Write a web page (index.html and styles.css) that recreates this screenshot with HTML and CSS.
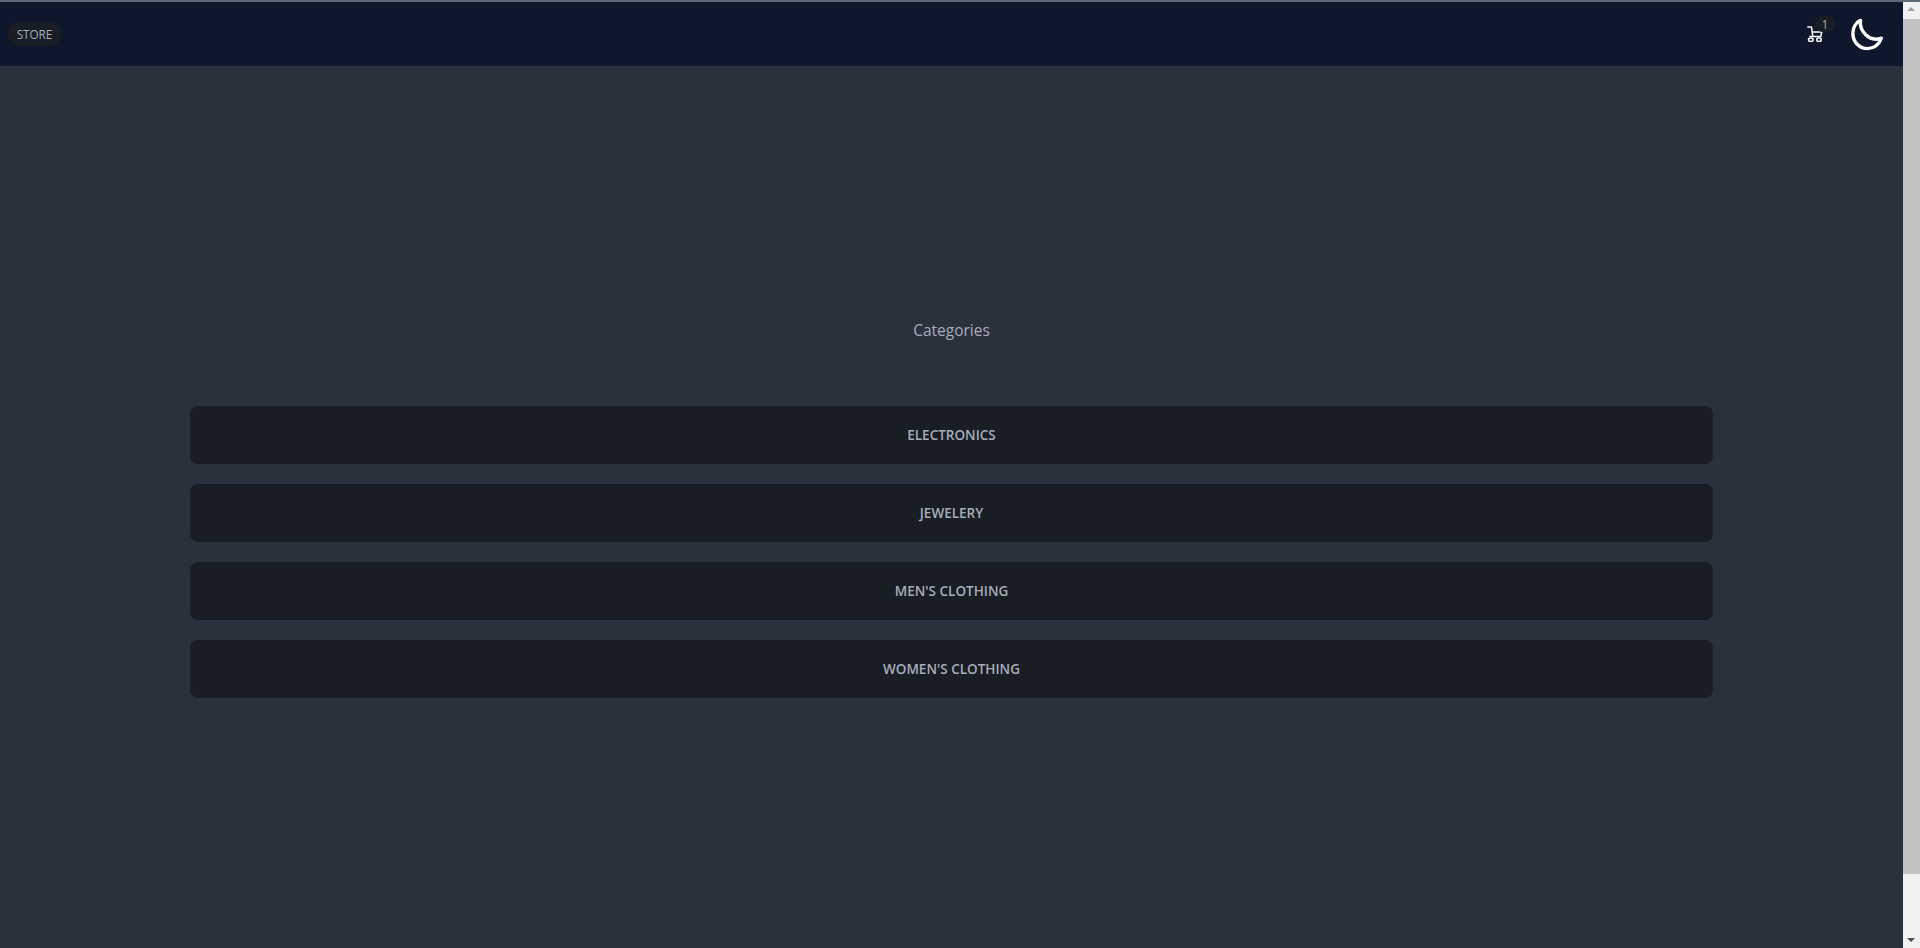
FILE: index.html
```html
<!DOCTYPE html>
<html lang="en">
<head>
<meta charset="utf-8">
<title>Store</title>
<link rel="stylesheet" href="styles.css">
</head>
<body>
<div class="topline"></div>
<div class="shell">
  <div class="app">
    <header class="navbar">
      <a class="brand">STORE</a>
      <div class="actions">
        <div class="cart">
          <svg class="cart-icon" viewBox="0 0 16 17" fill="none" stroke="currentColor" stroke-width="1.5" stroke-linejoin="round" stroke-linecap="round">
            <path d="M.8 2H4.500L5.800 11.500M5 7H14.800L13.800 11.500H3"/>
            <ellipse cx="3.800" cy="14.800" rx="2.300" ry="1.700"/>
            <ellipse cx="12" cy="14.800" rx="2.300" ry="1.700"/>
          </svg>
          <span class="badge">1</span>
        </div>
        <svg class="moon" viewBox="0 0 34 34" fill="none" stroke="currentColor" stroke-width="3.400" stroke-linejoin="round">
          <path d="M10.500 3.400C5.800 5.400 2.900 10.800 2.900 16.400 2.900 25 9.600 31.600 17.600 31.600 23.600 31.600 28.800 27.600 31.400 21.200 26 23 20 22 15.800 17.800 11.800 13.800 9.800 8.600 10.500 3.400Z"/>
        </svg>
      </div>
    </header>
    <main class="content">
      <h1 class="title">Categories</h1>
      <div class="list">
        <button class="category">ELECTRONICS</button>
        <button class="category">JEWELERY</button>
        <button class="category">MEN'S CLOTHING</button>
        <button class="category">WOMEN'S CLOTHING</button>
      </div>
    </main>
  </div>
  <div class="scrollbar">
    <div class="arrow arrow-up"></div>
    <div class="thumb"></div>
    <div class="arrow arrow-down"></div>
  </div>
</div>
</body>
</html>
```
FILE: styles.css
```css
* { box-sizing: border-box; }
html, body { margin: 0; height: 100%; overflow: hidden; }
body {
  font-family: "Open Sans", "Noto Sans", sans-serif;
  background: #2a303c;
  color: #a6adbb;
  display: flex;
  flex-direction: column;
}
.topline { height: 2px; background: #5c6b7a; flex: none; }
.shell { flex: 1; display: flex; min-height: 0; }
.app { flex: 1; min-width: 0; display: flex; flex-direction: column; }
.navbar {
  height: 64px;
  flex: none;
  background: #0e172b;
  display: flex;
  align-items: center;
  justify-content: space-between;
  padding: 0 19px 0 8px;
}
.brand {
  height: 24px;
  width: 53px;
  border-radius: 12px;
  background: #191d24;
  display: flex;
  align-items: center;
  justify-content: center;
  font-size: 11.7px;
  color: #a6adbb;
}
.actions { display: flex; align-items: center; gap: 7px; }
.cart { position: relative; width: 42px; height: 40px; color: #fff; }
.cart-icon { position: absolute; left: 6px; top: 11px; width: 16px; height: 17px; }
.badge {
  position: absolute;
  left: 14px;
  top: 2px;
  width: 20px;
  height: 16px;
  border-radius: 8px;
  background: #191d24;
  color: #a6adbb;
  font-size: 12px;
  line-height: 18px;
  text-align: center;
}
.moon { width: 34px; height: 34px; color: #fff; flex: none; }
.content { flex: 1; display: flex; flex-direction: column; align-items: center; padding-top: 252px; }
.title { margin: 0; font-size: 15.5px; font-weight: 400; line-height: 24px; height: 88px; }
.list { width: 1523px; display: flex; flex-direction: column; gap: 20px; }
.category {
  height: 58px;
  border: 0;
  border-radius: 8px;
  background: #191d24;
  color: #a6adbb;
  padding: 0;
  font: 600 13.5px "Open Sans", "Noto Sans", sans-serif;
}
.scrollbar {
  width: 17px;
  flex: none;
  background: #f1f1f1;
  display: flex;
  flex-direction: column;
  align-items: center;
}
.arrow { height: 17px; flex: none; width: 100%; position: relative; }
.arrow::after {
  content: "";
  position: absolute;
  left: 4px;
  border-left: 4px solid transparent;
  border-right: 4px solid transparent;
}
.arrow-up::after { top: 5px; border-bottom: 4px solid #a3a3a3; }
.arrow-down::after { top: 7px; border-top: 4px solid #505050; }
.thumb { flex: 1; width: 100%; background: #c1c1c1; margin: 0 0 57px; }
```
